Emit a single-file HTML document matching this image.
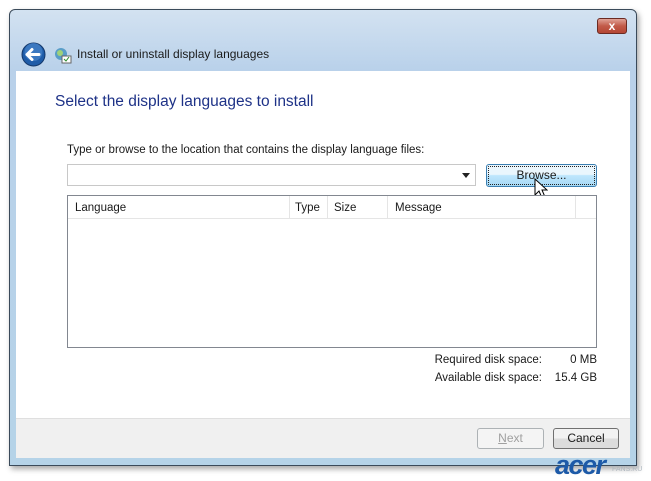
<!DOCTYPE html>
<html><head><meta charset="utf-8"><style>
*{margin:0;padding:0;box-sizing:border-box}
body{width:651px;height:481px;background:#fff;position:relative;overflow:hidden;font-family:"Liberation Sans",sans-serif;font-size:11.5px;color:#1a1a1a}
.abs{position:absolute}
#frame{left:9px;top:9px;width:628px;height:457px;border:1px solid #3a4a5a;border-radius:6px 6px 0 0;background:linear-gradient(#d3e2f1,#b9d1ea 60px,#b5d3e8);box-shadow:2px 3px 6px rgba(0,0,0,.35)}
#content{left:16px;top:71px;width:614px;height:347px;background:#fff}
#footer{left:16px;top:418px;width:614px;height:40px;background:#f0f0f0;border-top:1px solid #dfdfdf}
.btn{border:1px solid #707070;border-radius:3px;background:linear-gradient(#f2f2f2 50%,#dcdcdc 50%);text-align:center;line-height:19px;font-size:12px}
</style></head><body>
<div id="frame" class="abs"></div>
<div class="abs" style="left:597px;top:18px;width:30px;height:16px;border:1px solid #6b2a22;border-radius:3px;background:linear-gradient(#e0a296,#c25a48 50%,#b44634);color:#fff;font-weight:bold;font-size:12px;text-align:center;line-height:14px">x</div>
<svg class="abs" style="left:21px;top:42px" width="25" height="25"><circle cx="12.5" cy="12.5" r="11.5" fill="#1f5ca8" stroke="#14386a"/><circle cx="12.5" cy="10" r="9" fill="#4f8bd0" opacity=".6"/><path d="M6 12.5h12M6 12.5l5-5M6 12.5l5 5" stroke="#fff" stroke-width="3" fill="none" stroke-linecap="round"/></svg>
<svg class="abs" style="left:54px;top:47px" width="18" height="17"><circle cx="7" cy="7" r="6" fill="#5a9ec8"/><circle cx="6" cy="6" r="3" fill="#9fd27a"/><rect x="8" y="9" width="9" height="7" fill="#fff" stroke="#666"/><path d="M10 12l2 2 3-4" stroke="#2a8a2a" fill="none"/></svg>
<div class="abs" style="left:77px;top:47px;font-size:12px;color:#1a1a1a">Install or uninstall display languages</div>
<div id="content" class="abs"></div>
<div id="footer" class="abs"></div>
<div class="abs" style="left:55px;top:93px;font-size:15.5px;color:#1e3287">Select the display languages to install</div>
<div class="abs" style="left:67px;top:144px;font-size:11.5px">Type or browse to the location that contains the display language files:</div>
<div class="abs" style="left:67px;top:164px;width:409px;height:22px;border:1px solid #c8c8c8;background:#fff"></div>
<div class="abs" style="left:462px;top:173px;width:0;height:0;border-left:4px solid transparent;border-right:4px solid transparent;border-top:5px solid #222"></div>
<div class="abs btn" style="left:486px;top:164px;width:111px;height:23px;border-color:#3c7fb1;background:linear-gradient(#eaf6fd 45%,#bee6fd 50%,#a7d9f5);line-height:20px;outline:1px dotted #222;outline-offset:-3px">Browse...</div>
<svg class="abs" style="left:534px;top:178px" width="14" height="22"><path d="M1 1v16l4-4 3 7 3-1-3-7h5z" fill="#fff" stroke="#000"/></svg>
<div class="abs" style="left:67px;top:195px;width:530px;height:153px;border:1px solid #828790;background:#fff"></div>
<div class="abs" style="left:68px;top:196px;width:528px;height:23px;border-bottom:1px solid #e5e5e5;background:#fff"></div>
<div class="abs" style="left:289px;top:196px;width:1px;height:23px;background:#e5e5e5"></div>
<div class="abs" style="left:327px;top:196px;width:1px;height:23px;background:#e5e5e5"></div>
<div class="abs" style="left:387px;top:196px;width:1px;height:23px;background:#e5e5e5"></div>
<div class="abs" style="left:575px;top:196px;width:1px;height:23px;background:#e5e5e5"></div>
<div class="abs" style="left:75px;top:202px">Language</div>
<div class="abs" style="left:295px;top:202px">Type</div>
<div class="abs" style="left:334px;top:202px">Size</div>
<div class="abs" style="left:395px;top:202px">Message</div>
<div class="abs" style="left:380px;top:354px;width:162px;text-align:right">Required disk space:</div>
<div class="abs" style="left:540px;top:354px;width:57px;text-align:right">0 MB</div>
<div class="abs" style="left:380px;top:372px;width:162px;text-align:right">Available disk space:</div>
<div class="abs" style="left:540px;top:372px;width:57px;text-align:right">15.4 GB</div>
<div class="abs btn" style="left:477px;top:428px;width:67px;height:21px;border-color:#adb2b5;background:#f4f4f4;color:#a0a0a0"><u>N</u>ext</div>
<div class="abs btn" style="left:553px;top:428px;width:66px;height:21px">Cancel</div>
<div class="abs" style="left:555px;top:452px;font-size:27px;font-style:italic;font-weight:bold;color:#1d5aa8;letter-spacing:-1.5px;line-height:27px">acer</div>
<div class="abs" style="left:612px;top:466px;font-size:7px;color:#b0b8c0">FANS.RU</div>
</body></html>
